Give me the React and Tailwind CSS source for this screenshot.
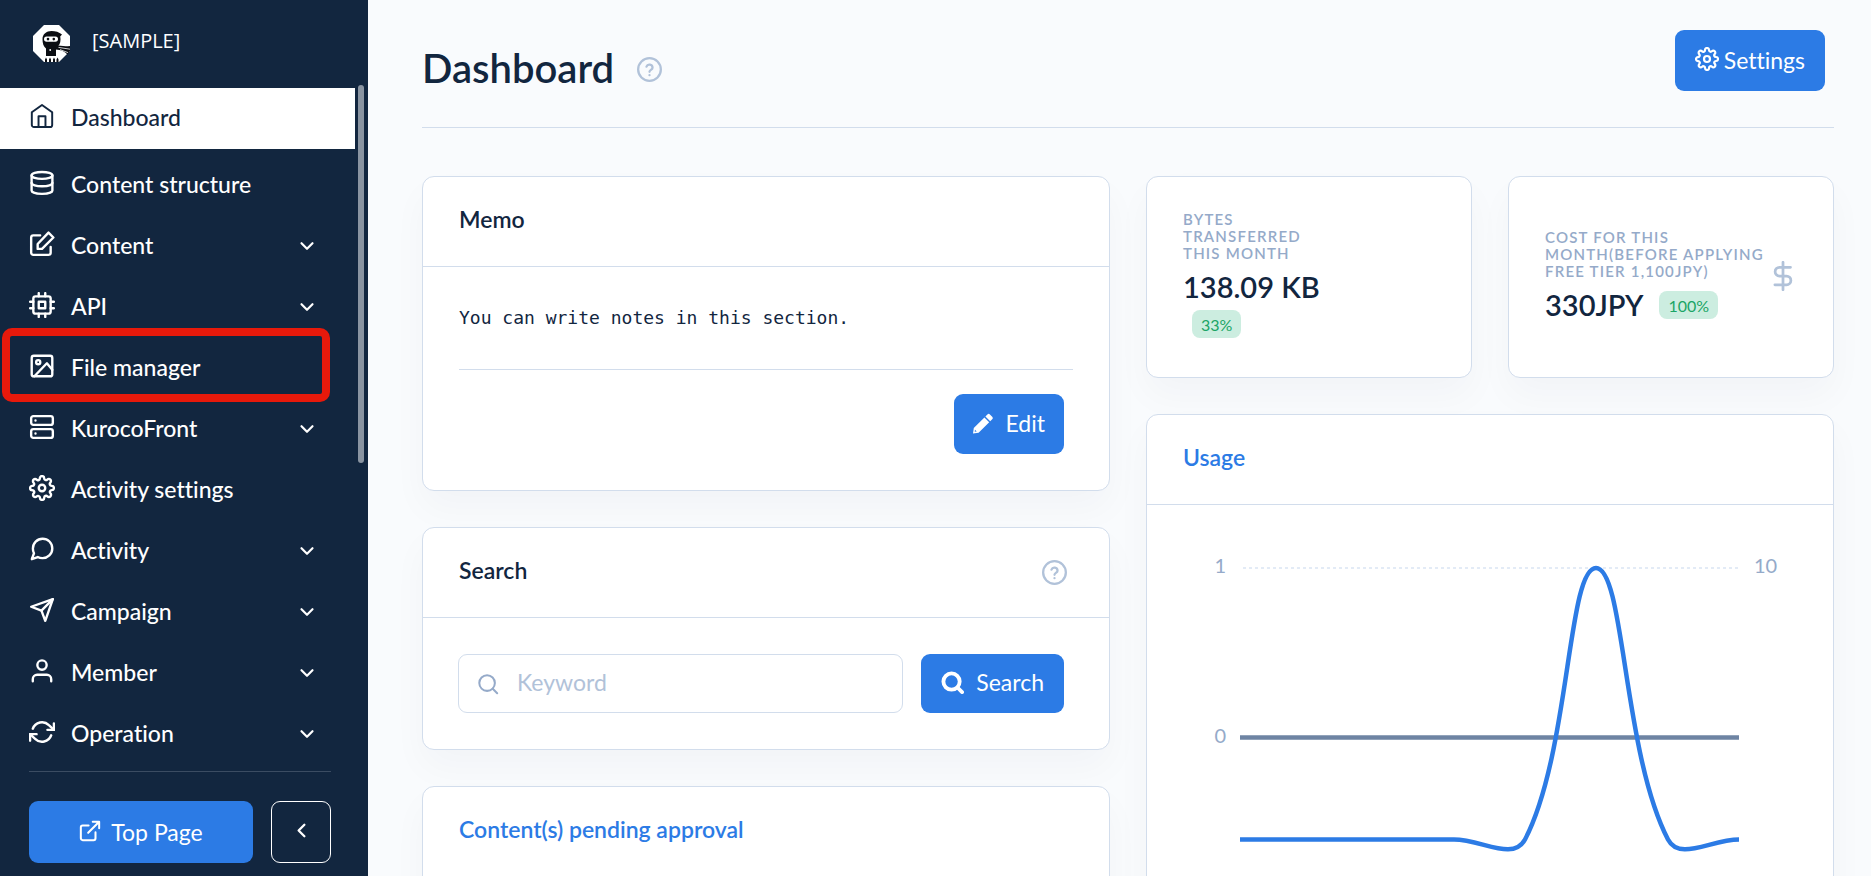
import React from "react";

const svgProps = {
  viewBox: "0 0 24 24",
  fill: "none",
  stroke: "currentColor",
  strokeLinecap: "round",
  strokeLinejoin: "round",
  "aria-hidden": true,
};

function Icon({ name, className = "size-[26px]", strokeWidth = 2.2 }) {
  return (
    <svg {...svgProps} strokeWidth={strokeWidth} className={`${className} shrink-0`}>
      {icons[name]}
    </svg>
  );
}

const icons = {
  home: (
    <>
      <path d="M2.600 8.600 12 1.800l9.400 6.800v11.600a2 2 0 0 1-2 2H4.600a2 2 0 0 1-2-2z" />
      <path d="M8.800 22v-9.800h6.400V22" />
    </>
  ),
  database: (
    <>
      <ellipse cx="12" cy="5" rx="9.600" ry="3.200" />
      <path d="M21.600 12c0 1.700-4.200 3-9.600 3s-9.600-1.300-9.600-3" />
      <path d="M2.400 5v14c0 1.700 4.200 3 9.600 3s9.600-1.300 9.600-3V5" />
    </>
  ),
  edit: (
    <>
      <path d="M20 14.700V20a2 2 0 0 1-2 2H4a2 2 0 0 1-2-2V6a2 2 0 0 1 2-2h6.300" />
      <path d="M18 1.500 22.500 6 12 16.500H8V12z" />
    </>
  ),
  cpu: (
    <>
      <rect x="4" y="4" width="16" height="16" rx="2" />
      <rect x="9" y="9" width="6" height="6" />
      <path d="M9 1v3M15 1v3M9 20v3M15 20v3M20 9h3M20 15h3M1 9h3M1 15h3" />
    </>
  ),
  image: (
    <>
      <rect x="2.500" y="2.500" width="19" height="19" rx="2" />
      <circle cx="8.500" cy="8.500" r="1.900" />
      <path d="m21.500 15.500-5-6L5 21.500" />
    </>
  ),
  server: (
    <>
      <rect x="2" y="2" width="20" height="8" rx="2" />
      <rect x="2" y="14" width="20" height="8" rx="2" />
      <path d="M6 6h.01M6 18h.01" />
    </>
  ),
  settings: (
    <>
      <circle cx="12" cy="12" r="3" />
      <path d="M19.400 15a1.650 1.650 0 0 0 .33 1.820l.06.060a2 2 0 0 1 0 2.830 2 2 0 0 1-2.830 0l-.06-.060a1.650 1.650 0 0 0-1.820-.33 1.650 1.650 0 0 0-1 1.510V21a2 2 0 0 1-2 2 2 2 0 0 1-2-2v-.09A1.650 1.650 0 0 0 9 19.400a1.650 1.650 0 0 0-1.820.33l-.06.060a2 2 0 0 1-2.830 0 2 2 0 0 1 0-2.830l.06-.060a1.650 1.650 0 0 0 .33-1.820 1.650 1.650 0 0 0-1.510-1H3a2 2 0 0 1-2-2 2 2 0 0 1 2-2h.09A1.650 1.650 0 0 0 4.600 9a1.650 1.650 0 0 0-.33-1.820l-.06-.060a2 2 0 0 1 0-2.830 2 2 0 0 1 2.830 0l.06.060a1.650 1.650 0 0 0 1.820.33H9a1.650 1.650 0 0 0 1-1.510V3a2 2 0 0 1 2-2 2 2 0 0 1 2 2v.09a1.650 1.650 0 0 0 1 1.510 1.650 1.650 0 0 0 1.820-.33l.06-.060a2 2 0 0 1 2.830 0 2 2 0 0 1 0 2.830l-.06.060a1.650 1.650 0 0 0-.33 1.820V9a1.650 1.650 0 0 0 1.510 1H21a2 2 0 0 1 2 2 2 2 0 0 1-2 2h-.09a1.650 1.650 0 0 0-1.510 1z" />
    </>
  ),
  message: (
    <path d="M21.500 11.500a8.900 8.900 0 0 1-9.200 8.900 9 9 0 0 1-4.200-1L2.600 21.400l2-5.500a9 9 0 0 1-1-4.400 8.900 8.900 0 0 1 8.900-9 8.900 8.900 0 0 1 9 9z" />
  ),
  send: (
    <>
      <path d="M22 2 11.500 12.500" />
      <path d="M22 2 15 22l-3.500-9.500L2 9z" />
    </>
  ),
  user: (
    <>
      <path d="M20.500 21.500v-2a4 4 0 0 0-4-4h-9a4 4 0 0 0-4 4v2" />
      <circle cx="12" cy="6.500" r="4.300" />
    </>
  ),
  refresh: (
    <>
      <path d="M23 4v6h-6" />
      <path d="M1 20v-6h6" />
      <path d="M3.510 9a9 9 0 0 1 14.850-3.360L23 10M1 14l4.640 4.360A9 9 0 0 0 20.490 15" />
    </>
  ),
  external: (
    <>
      <path d="M18 13.500V20a2 2 0 0 1-2 2H4a2 2 0 0 1-2-2V8a2 2 0 0 1 2-2h6.500" />
      <path d="M15 2h7v7M10 14 22 2" />
    </>
  ),
  down: <path d="m6 9 6 6 6-6" />,
  left: <path d="m15 6-6 6 6 6" />,
  help: (
    <>
      <circle cx="12" cy="12" r="10.900" />
      <path d="M9.100 9.200a3 3 0 0 1 5.800 1c0 2-2.900 2.300-2.900 4M12 17.400h.01" />
    </>
  ),
  search: (
    <>
      <circle cx="11" cy="11" r="8.500" />
      <path d="m22 22-4.800-4.800" />
    </>
  ),
  dollar: (
    <path d="M12 1v22M18 5H9.200a3.500 3.500 0 0 0 0 7h5.600a3.500 3.500 0 0 1 0 7H5.500" />
  ),
};

function NinjaLogo() {
  return (
    <svg viewBox="0 0 37 37" className="size-[37px] shrink-0" role="img" aria-label="Logo">
      <path d="M11 0h15l11 11v15L26 37H11L0 26V11z" fill="#fff" />
      <path d="M9.500 14c0-5 4-8 9-8 4 0 7.500 1 10.500 3.500l-1.800 2c.2 1 .3 1.800.3 3 0 4-1.500 6.500-4.500 8.200V31H13v-7.500c-2.500-2-3.500-5-3.500-9.500z" fill="#0b0d12" />
      <path d="M22.500 20c4.500 1 9 1.500 14.500 1V26l-2.500 3.500c-3-3-6-4.500-12-5z" fill="#0b0d12" />
      <path d="m25.500 22.400 11.500 1.800M27 24.600l8 3" stroke="#fff" strokeWidth=".8" />
      <rect x="11" y="11.500" width="14" height="5.200" rx="2.600" fill="#fff" />
      <circle cx="15" cy="14.100" r="1.300" fill="#0b0d12" />
      <circle cx="20.800" cy="14.100" r="1.300" fill="#0b0d12" />
      <circle cx="17.200" cy="25" r=".9" fill="#fff" />
      <path d="M12 37v-2.500l1-2 1 2V37zM16 37v-2.500l1-2 1 2V37zM20 37v-2.500l1-2 1 2V37zM23.500 37v-2.500l1-2 1 2V37z" fill="#0b0d12" />
    </svg>
  );
}

const navItems = [
  { label: "Content structure", icon: "database" },
  { label: "Content", icon: "edit", menu: true },
  { label: "API", icon: "cpu", menu: true },
  { label: "File manager", icon: "image", marked: true },
  { label: "KurocoFront", icon: "server", menu: true },
  { label: "Activity settings", icon: "settings" },
  { label: "Activity", icon: "message", menu: true },
  { label: "Campaign", icon: "send", menu: true },
  { label: "Member", icon: "user", menu: true },
  { label: "Operation", icon: "refresh", menu: true },
];

function Sidebar() {
  return (
    <aside className="relative flex h-full w-[368px] shrink-0 flex-col bg-[#12263f] text-white">
      <div className="flex h-[88px] items-start gap-[22px] pl-[33px] pt-[25px]">
        <NinjaLogo />
        <span className="font-['Open_Sans',sans-serif] text-[20px] leading-[32px]">[SAMPLE]</span>
      </div>
      <nav className="flex min-h-0 flex-1 flex-col overflow-hidden">
        <a
          href="#dashboard"
          aria-current="page"
          className="mr-[13px] mb-[6px] flex h-[61px] shrink-0 items-center gap-[16px] bg-white pb-[2px] pl-[29px] font-medium text-[#12263f]"
        >
          <Icon name="home" strokeWidth={1.8} className="mb-[3px] size-[26px]" />
          Dashboard
        </a>
        {navItems.map((item) => (
          <a
            key={item.label}
            href="#"
            className="relative flex h-[61px] shrink-0 items-center gap-[16px] pr-[50px] pb-[2px] pl-[29px] font-medium"
          >
            <Icon name={item.icon} className="mb-[3px] size-[26px]" />
            <span className="flex-1">{item.label}</span>
            {item.menu && <Icon name="down" className="size-[22px]" strokeWidth={2.4} />}
            {item.marked && (
              <span className="absolute -top-[10px] right-[38px] left-[2px] z-10 h-[74px] rounded-[10px] border-[8px] border-[#e7190b]" />
            )}
          </a>
        ))}
      </nav>
      <div className="absolute top-[85px] right-[4px] h-[378px] w-[6px] rounded-full bg-[#8a94a1]" />
      <div className="mr-[37px] ml-[29px] flex gap-[18px] border-t border-[#3b4c62] pt-[29px] pb-[13px]">
        <a
          href="#top"
          className="flex h-[62px] flex-1 items-center justify-center gap-[10px] rounded-[9px] bg-[#2c7be5]"
        >
          <Icon name="external" className="mb-[3px] size-[22px]" />
          Top Page
        </a>
        <button
          type="button"
          aria-label="Collapse menu"
          className="flex h-[62px] w-[60px] items-center justify-center rounded-[9px] border border-white pb-1"
        >
          <Icon name="left" className="size-[23px]" strokeWidth={2.4} />
        </button>
      </div>
    </aside>
  );
}

function Card({ title, link, action, children, className = "" }) {
  return (
    <section
      className={`rounded-[12px] border border-[#d2ddec] bg-white shadow-[0_18px_36px_rgba(18,38,63,0.03)] ${className}`}
    >
      {title && (
        <header className="flex h-[90px] items-center justify-between border-b border-[#d2ddec] px-[36px] pb-[4px]">
          <h2 className={link ? "font-semibold text-[#2c7be5]" : "font-semibold"}>
            {link ? <a href="#">{title}</a> : title}
          </h2>
          {action}
        </header>
      )}
      {children}
    </section>
  );
}

function HelpButton() {
  return (
    <button type="button" aria-label="Help" className="mt-[3px] text-[#b1c2d9]">
      <Icon name="help" className="size-[25px]" />
    </button>
  );
}

function Badge({ children }) {
  return (
    <span className="inline-flex h-[28px] items-center rounded-[8px] bg-[#ccede0] px-[9px] text-[16px] text-[#1ba566]">
      {children}
    </span>
  );
}

function StatLabel({ children }) {
  return (
    <h3 className="text-[15px] leading-[17px] font-semibold tracking-[0.08em] text-[#95aac9] uppercase">
      {children}
    </h3>
  );
}

function UsageChart() {
  return (
    <svg viewBox="0 0 614 420" className="w-full" role="img" aria-label="Usage chart">
      <g fill="#95aac9" fontSize="20">
        <text x="43" y="32" textAnchor="end">1</text>
        <text x="43" y="202" textAnchor="end">0</text>
        <text x="571" y="32">10</text>
      </g>
      <path d="M60 27H556" stroke="#e3ebf6" strokeWidth="2" strokeDasharray="3 3" />
      <path d="M57 196.500H556" stroke="#6e84a3" strokeWidth="4.500" />
      <path
        d="M57 298.500H271C299 298.500 330 320.500 342 298.500C387 212 384.500 27 413 27C441.500 27 440 212 485 298.500C496.500 320.500 528 298.500 556 298.500"
        fill="none"
        stroke="#2c7be5"
        strokeWidth="4.500"
      />
    </svg>
  );
}

export default function App() {
  return (
    <div className="flex h-screen overflow-hidden bg-[#f9fbfd] font-[Lato,sans-serif] text-[23px] leading-[33px] text-[#12263f] [font-variant-ligatures:none]">
      <Sidebar />
      <main className="min-w-0 flex-1 overflow-hidden pr-[37px] pl-[54px]">
        <header className="flex h-[128px] items-start justify-between border-b border-[#d2ddec] pt-[30px] pr-[9px]">
          <div className="flex items-center gap-[23px] pt-[14px]">
            <h1 className="text-[40px] leading-[48px] font-semibold">Dashboard</h1>
            <HelpButton />
          </div>
          <button
            type="button"
            className="flex h-[61px] items-center gap-[5px] rounded-[9px] bg-[#2c7be5] px-[20px] text-white"
          >
            <Icon name="settings" className="mb-1 size-[24px]" />
            Settings
          </button>
        </header>

        <div className="mt-[48px] grid grid-cols-2 items-start gap-[36px]">
          <div className="flex flex-col gap-[36px]">
            <Card title="Memo">
              <div className="px-[36px] pb-[36px]">
                <p className="border-b border-[#d2ddec] pt-[34px] pb-[35px] font-['DejaVu_Sans_Mono',monospace] text-[18px]">
                  You can write notes in this section.
                </p>
                <div className="flex justify-end pt-[24px] pr-[9px]">
                  <button
                    type="button"
                    className="flex h-[60px] items-center gap-[13px] rounded-[9px] bg-[#2c7be5] px-[19px] pb-[2px] text-white"
                  >
                    <svg viewBox="0 0 20 27" className="h-[27px] w-[20px]" aria-hidden="true">
                      <path d="M14.400 4.400a1.800 1.800 0 0 1 2.500 0l2.300 2.300a1.800 1.800 0 0 1 0 2.500l-2 2-4.800-4.800zM11.400 7.400l4.800 4.800L5.600 22.800 0 23.500l.8-5.500zM2 19.800l-.3 2 2-.300z" fill="currentColor" fillRule="evenodd" />
                    </svg>
                    Edit
                  </button>
                </div>
              </div>
            </Card>

            <Card title="Search" action={<span className="flex pr-[6px]"><HelpButton /></span>}>
              <form className="flex gap-[18px] pt-[36px] pr-[45px] pb-[36px] pl-[35px]" onSubmit={(e) => e.preventDefault()}>
                <label className="flex h-[59px] min-w-0 flex-1 items-center gap-[18px] rounded-[9px] border border-[#d2ddec] px-[18px] text-[#95aac9]">
                  <Icon name="search" className="size-[22px]" />
                  <input
                    type="text"
                    aria-label="Keyword"
                    placeholder="Keyword"
                    className="min-w-0 flex-1 bg-transparent pb-[2px] text-[#12263f] outline-none placeholder:text-[#b1c2d9]"
                  />
                </label>
                <button
                  type="submit"
                  className="flex h-[59px] items-center gap-[12px] rounded-[9px] bg-[#2c7be5] px-[20px] pb-[2px] text-white"
                >
                  <Icon name="search" className="size-[23px]" strokeWidth={4} />
                  Search
                </button>
              </form>
            </Card>

            <Card title="Content(s) pending approval" link>
              <div className="h-[200px]" />
            </Card>
          </div>

          <div className="flex flex-col gap-[36px]">
            <div className="grid grid-cols-2 gap-[36px]">
              <Card className="flex h-[202px] items-center px-[36px] pb-[5px]">
                <div className="w-[140px]">
                  <StatLabel>Bytes transferred this month</StatLabel>
                  <p className="mt-[8px] text-[29px] leading-[34px] font-semibold">138.09 KB</p>
                  <div className="mt-[6px] flex pl-[9px]">
                    <Badge>33%</Badge>
                  </div>
                </div>
              </Card>
              <Card className="flex h-[202px] items-center justify-between pr-[35px] pb-[3px] pl-[36px]">
                <div className="min-w-0">
                  <StatLabel>
                    Cost for this
                    <br />
                    month(before applying
                    <br />
                    free tier 1,100JPY)
                  </StatLabel>
                  <div className="mt-[8px] flex items-center gap-[16px]">
                    <p className="text-[29px] leading-[34px] font-semibold">330JPY</p>
                    <Badge>100%</Badge>
                  </div>
                </div>
                <Icon name="dollar" className="-ml-[8px] size-[30px] text-[#b1c2d9]" />
              </Card>
            </div>
            <Card title="Usage" link>
              <div className="p-[36px]">
                <UsageChart />
              </div>
            </Card>
          </div>
        </div>
      </main>
    </div>
  );
}
